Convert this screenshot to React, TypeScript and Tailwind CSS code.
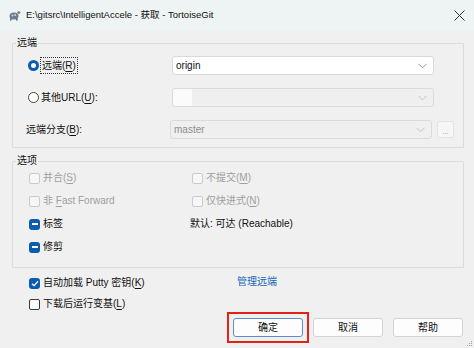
import React from "react";

const font = { fontFamily: '"Liberation Sans", "Noto Sans CJK SC", sans-serif' };

function U({ c }: { c: string }) {
  return <span className="underline underline-offset-[2px] decoration-[1px]">{c}</span>;
}

function Chevron({ color = "#9a9a9a" }: { color?: string }) {
  return (
    <svg width="9" height="6" viewBox="0 0 9 6" className="shrink-0">
      <path d="M0.5 0.8 L4.5 4.8 L8.5 0.8" fill="none" stroke={color} strokeWidth="1" />
    </svg>
  );
}

function CheckBox({ kind }: { kind: "disabled" | "indet" | "checked" | "off" }) {
  if (kind === "disabled")
    return <span className="w-[11px] h-[11px] rounded-[2px] border border-[#cacaca] bg-[#f6f6f6] shrink-0" />;
  if (kind === "off")
    return <span className="w-[11px] h-[11px] rounded-[2px] border border-[#3a3a3a] bg-white shrink-0" />;
  if (kind === "indet")
    return (
      <span className="w-[11px] h-[11px] rounded-[3px] bg-[#0a5cb0] shrink-0 flex items-center justify-center">
        <span className="w-[6px] h-[1.5px] bg-white" />
      </span>
    );
  return (
    <span className="w-[11px] h-[11px] rounded-[3px] bg-[#0a5cb0] shrink-0 flex items-center justify-center">
      <svg width="8" height="7" viewBox="0 0 9 8">
        <path d="M1 4.2 L3.4 6.4 L8 1.4" fill="none" stroke="white" strokeWidth="1.4" />
      </svg>
    </span>
  );
}

function Check({ kind, children, disabled }: { kind: "disabled" | "indet" | "checked" | "off"; children: React.ReactNode; disabled?: boolean }) {
  return (
    <div className={`flex items-center gap-[3px] h-[16px] ${disabled ? "text-[#9f9f9f]" : "text-[#111]"}`}>
      <CheckBox kind={kind} />
      <span className="whitespace-nowrap">{children}</span>
    </div>
  );
}

function Button({ children, primary }: { children: React.ReactNode; primary?: boolean }) {
  const btn = (
    <button
      className={`w-[70px] h-[19px] rounded-[3px] bg-[#fdfdfd] text-[10px] leading-[14px] text-[#111] flex items-center justify-center border ${
        primary ? "border-[#5a8fcb]" : "border-[#d4d4d4]"
      }`}
    >
      {children}
    </button>
  );
  if (!primary) return btn;
  return <div className="-m-[6px] p-[4px] border-2 border-[#e2231a]">{btn}</div>;
}

export default function App() {
  return (
    <div className="w-[474px] h-[348px] bg-[#f0f0f0] overflow-hidden relative text-[10px] leading-[14px] text-[#111]" style={font}>
      {/* title bar */}
      <div className="h-[30px] bg-[#eef4f3] flex items-center pl-[8px] pr-[9px]">
        <svg width="13" height="12" viewBox="0 0 13 12" className="shrink-0">
          <ellipse cx="6" cy="7" rx="4.5" ry="3.5" fill="#6d7c8c" />
          <circle cx="4.5" cy="6.5" r="1" fill="#c9d3dd" />
          <circle cx="7.2" cy="6" r="1" fill="#c9d3dd" />
          <circle cx="10.8" cy="3.5" r="1.6" fill="#7d8a98" />
          <rect x="2" y="9.5" width="1.6" height="2" fill="#5d6b79" />
          <rect x="8" y="9.5" width="1.6" height="2" fill="#5d6b79" />
        </svg>
        <span className="ml-[5px] text-[9.5px] text-[#111] whitespace-nowrap">E:\gitsrc\IntelligentAccele - 获取 - TortoiseGit</span>
        <div className="flex-1" />
        <svg width="11" height="11" viewBox="0 0 11 11">
          <path d="M0.5 0.5 L10.5 10.5 M10.5 0.5 L0.5 10.5" stroke="#333" strokeWidth="1" />
        </svg>
      </div>

      <div className="pl-[12px] pr-[10px]">
        {/* group 1 */}
        <div className="relative mt-[13px] h-[105px] border border-[#dcdcdc] rounded-[1px] pt-[12px] pl-[15px] flex flex-col gap-[13px]">
          <span className="absolute -top-[8px] left-[3px] px-[1px] bg-[#f0f0f0] text-[#111]">远端</span>
          <div className="flex items-center h-[19px]">
            <div className="w-[144px] flex items-center gap-[1px]">
              <span className="w-[11px] h-[11px] rounded-full bg-[#0a5cb0] flex items-center justify-center shrink-0">
                <span className="w-[5px] h-[5px] rounded-full bg-white" />
              </span>
              <span className="border border-dotted border-[#333] px-[1px] leading-[15px]">
                远端(<U c="R" />)
              </span>
            </div>
            <div className="w-[262px] h-[19px] bg-white border border-[#d9d9d9] rounded-[3px] flex items-center pl-[3px] pr-[6px]">
              <span className="flex-1">origin</span>
              <Chevron />
            </div>
          </div>
          <div className="flex items-center h-[19px]">
            <div className="w-[144px] flex items-center gap-[2px]">
              <span className="w-[11px] h-[11px] rounded-full border border-[#444] bg-white shrink-0" />
              <span>
                其他URL(<U c="U" />):
              </span>
            </div>
            <div className="w-[262px] h-[19px] bg-[#efefef] border border-[#dadada] rounded-[3px] flex items-center pr-[6px] overflow-hidden">
              <span className="w-[19px] h-full bg-[#fbfbfb]" />
              <span className="flex-1" />
              <Chevron color="#c4c4c4" />
            </div>
          </div>
          <div className="flex items-center h-[19px]">
            <div className="w-[144px] flex items-center -ml-[2px] pr-[2px]">
              <span>
                远端分支(<U c="B" />):
              </span>
            </div>
            <div className="w-[262px] h-[19px] bg-[#efefef] border border-[#dadada] rounded-[3px] flex items-center pl-[3px] pr-[6px]">
              <span className="flex-1 text-[#8e8e8e]">master</span>
              <Chevron color="#c4c4c4" />
            </div>
            <div className="ml-[5px] w-[17px] h-[17px] bg-[#f6f6f6] border border-[#e3e3e3] rounded-[2px] text-[#9a9a9a] text-[8px] leading-[11px] flex items-end justify-center">
              ...
            </div>
          </div>
        </div>

        {/* group 2 */}
        <div className="relative mt-[13px] h-[107px] border border-[#dcdcdc] rounded-[1px] pt-[8px] pl-[16px] flex flex-col gap-[7px]">
          <span className="absolute -top-[8px] left-[3px] px-[1px] bg-[#f0f0f0] text-[#111]">选项</span>
          <div className="flex">
            <div className="w-[163px]">
              <Check kind="disabled" disabled>
                并合(<U c="S" />)
              </Check>
            </div>
            <Check kind="disabled" disabled>
              不提交(<U c="M" />)
            </Check>
          </div>
          <div className="flex">
            <div className="w-[163px]">
              <Check kind="disabled" disabled>
                非 <U c="F" />ast Forward
              </Check>
            </div>
            <Check kind="disabled" disabled>
              仅快进式(<U c="N" />)
            </Check>
          </div>
          <div className="flex">
            <div className="w-[161px]">
              <Check kind="indet">标签</Check>
            </div>
            <div className="h-[16px] flex items-center">默认: 可达 (Reachable)</div>
          </div>
          <div className="flex">
            <Check kind="indet">修剪</Check>
          </div>
        </div>

        {/* bottom options */}
        <div className="mt-[7px] pl-[17px] flex flex-col gap-[5px]">
          <div className="flex items-center">
            <div className="w-[208px]">
              <Check kind="checked">
                自动加载 Putty 密钥(<U c="K" />)
              </Check>
            </div>
            <span className="text-[#1466b8] -mt-[2px]">管理远端</span>
          </div>
          <Check kind="off">
            下载后运行变基(<U c="L" />)
          </Check>
        </div>

        <div className="mt-[6px] flex justify-end gap-[10px] pr-[1px]">
          <Button primary>确定</Button>
          <Button>取消</Button>
          <Button>帮助</Button>
        </div>
      </div>

      {/* resize grip */}
      <div className="absolute right-[2px] bottom-[2px] grid grid-cols-3 gap-[1px]">
        <span className="w-[1px] h-[1px]" />
        <span className="w-[1px] h-[1px]" />
        <span className="w-[1px] h-[1px] bg-[#a0a0a0]" />
        <span className="w-[1px] h-[1px]" />
        <span className="w-[1px] h-[1px] bg-[#a0a0a0]" />
        <span className="w-[1px] h-[1px] bg-[#a0a0a0]" />
        <span className="w-[1px] h-[1px] bg-[#a0a0a0]" />
        <span className="w-[1px] h-[1px] bg-[#a0a0a0]" />
        <span className="w-[1px] h-[1px] bg-[#a0a0a0]" />
      </div>
    </div>
  );
}
